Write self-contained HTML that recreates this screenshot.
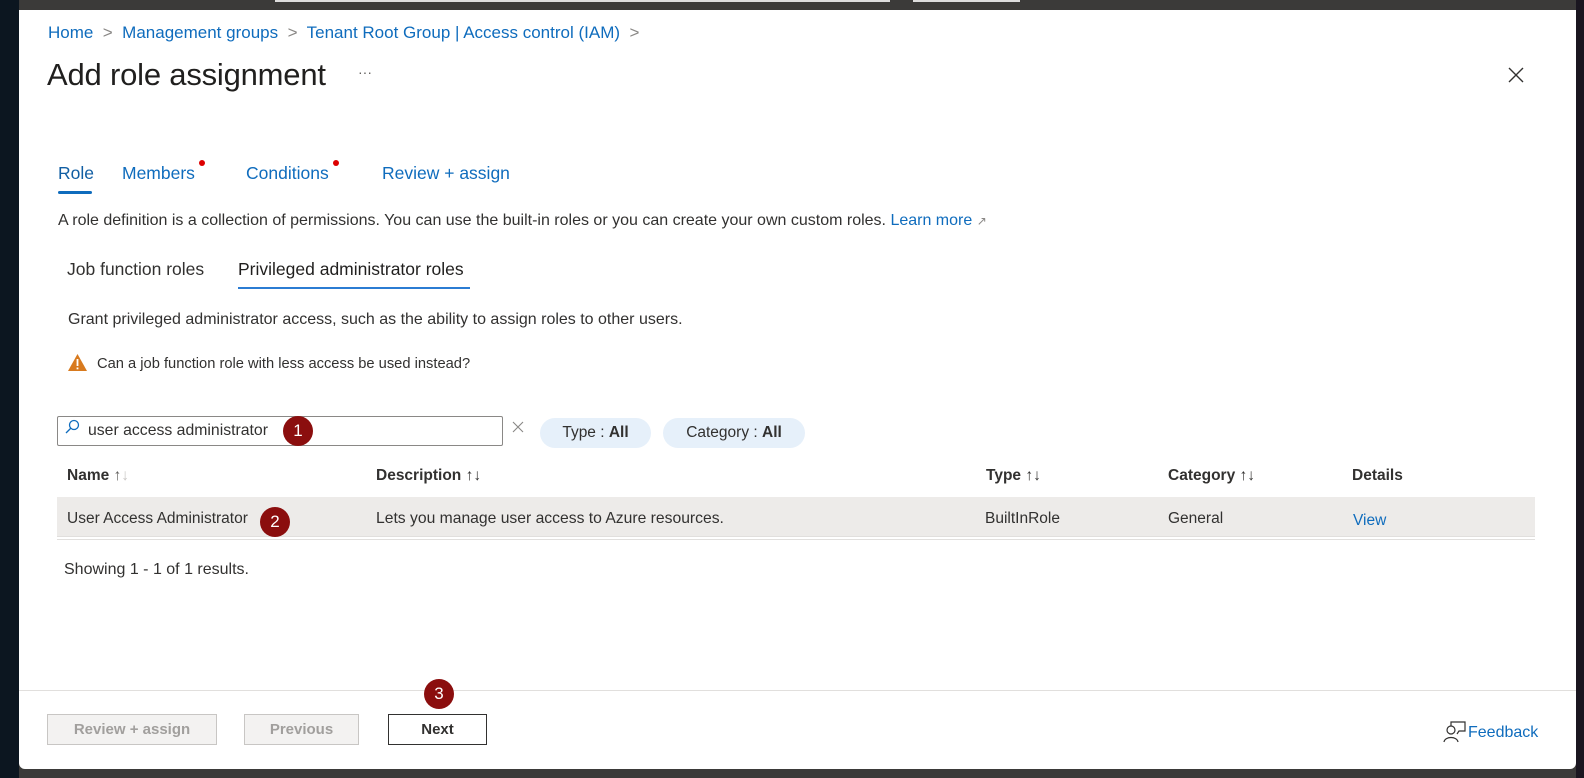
<!DOCTYPE html>
<html><head><meta charset="utf-8"><style>
*{margin:0;padding:0;box-sizing:border-box}
body{width:1584px;height:778px;overflow:hidden;background:#3b3a39;font-family:"Liberation Sans","DejaVu Sans",sans-serif;position:relative}
.a{position:absolute;white-space:nowrap}
#left{left:0;top:0;width:19px;height:778px;background:#0c1620}
#right{left:1576px;top:0;width:8px;height:778px;background:#1a1620}
#panel{left:19px;top:10px;width:1557px;height:759px;background:#fff;border-radius:0 0 6px 6px}
.blue{color:#0f6cbd}
.t{color:#323130}
.badge{position:absolute;width:30px;height:30px;border-radius:50%;background:#8b0e0e;color:#fff;font-size:17px;text-align:center;line-height:30px}
.btn{position:absolute;height:31px;border:1px solid #8a8886;font-size:15px;font-weight:bold;text-align:center;line-height:29px}
.dis{background:#f3f2f1;color:#a19f9d;border-color:#c8c6c4}
.pill{position:absolute;height:30px;border-radius:15px;background:#e6f0fa;font-size:15.5px;line-height:30px;text-align:center;color:#323130}
</style></head><body>
<div class="a" id="left"></div>
<div class="a" id="right"></div>
<div class="a" style="left:275px;top:0;width:615px;height:2px;background:#ddd"></div>
<div class="a" style="left:913px;top:0;width:107px;height:2px;background:#ddd"></div>
<div class="a" id="panel"></div>

<div class="a blue" style="left:48px;top:23px;font-size:17px">Home <span style="color:#8a8886">&nbsp;&gt;&nbsp;</span> Management groups <span style="color:#8a8886">&nbsp;&gt;&nbsp;</span> Tenant Root Group | Access control (IAM) <span style="color:#8a8886">&nbsp;&gt;</span></div>
<div class="a" style="left:47px;top:57px;font-size:31px;color:#201f1e;letter-spacing:-0.2px">Add role assignment</div>
<div class="a" style="left:358px;top:64px;font-size:14px;color:#605e5c">···</div>
<svg class="a" style="left:1508px;top:67px" width="16" height="16"><path d="M1 1L15 15M15 1L1 15" stroke="#323130" stroke-width="1.4"/></svg>

<div class="a blue" style="left:58px;top:163px;font-size:17.5px;color:#115ea3">Role</div>
<div class="a" style="left:58px;top:191px;width:34px;height:3px;background:#0f6cbd;border-radius:2px"></div>
<div class="a blue" style="left:122px;top:163px;font-size:17.5px">Members</div>
<div class="a" style="left:199px;top:160px;width:6px;height:6px;border-radius:50%;background:#d00"></div>
<div class="a blue" style="left:246px;top:163px;font-size:17.5px">Conditions</div>
<div class="a" style="left:333px;top:160px;width:6px;height:6px;border-radius:50%;background:#d00"></div>
<div class="a blue" style="left:382px;top:163px;font-size:17.5px">Review + assign</div>

<div class="a t" style="left:58px;top:212px;font-size:16px">A role definition is a collection of permissions. You can use the built-in roles or you can create your own custom roles. <span class="blue">Learn more</span> <span style="color:#8a8886;font-size:12px">↗</span></div>

<div class="a t" style="left:67px;top:259px;font-size:17.5px">Job function roles</div>
<div class="a" style="left:238px;top:259px;font-size:17.5px;color:#201f1e">Privileged administrator roles</div>
<div class="a" style="left:238px;top:287px;width:232px;height:2px;background:#2b7cd3"></div>

<div class="a t" style="left:68px;top:311px;font-size:16px">Grant privileged administrator access, such as the ability to assign roles to other users.</div>
<svg class="a" style="left:67px;top:353px" width="21" height="19"><path d="M10.5 1L20 18H1Z" fill="#d87a1e"/><rect x="9.6" y="6" width="1.8" height="7" fill="#fff"/><rect x="9.6" y="14.5" width="1.8" height="1.8" fill="#fff"/></svg>
<div class="a t" style="left:97px;top:356px;font-size:14.7px">Can a job function role with less access be used instead?</div>

<div class="a" style="left:57px;top:416px;width:446px;height:30px;border:1px solid #8a8886;border-radius:2px"></div>
<svg class="a" style="left:64px;top:419px" width="16" height="16"><circle cx="10" cy="6" r="4.5" fill="none" stroke="#0f6cbd" stroke-width="1.3"/><path d="M7 9L2 14" stroke="#0f6cbd" stroke-width="1.3"/></svg>
<div class="a t" style="left:88px;top:422px;font-size:15.8px">user access administrator</div>
<div class="badge" style="left:283px;top:416px">1</div>
<svg class="a" style="left:512px;top:421px" width="12" height="12"><path d="M1 1L11 11M11 1L1 11" stroke="#8a8886" stroke-width="1.1"/></svg>
<div class="pill" style="left:540px;top:418px;width:111px">Type : <b>All</b></div>
<div class="pill" style="left:663px;top:418px;width:142px">Category : <b>All</b></div>

<div class="a t" style="left:67px;top:467px;font-size:15.5px;font-weight:bold">Name <span style="font-weight:normal;color:#605e5c">↑<span style="color:#c8c6c4">↓</span></span></div>
<div class="a t" style="left:376px;top:467px;font-size:15.5px;font-weight:bold">Description <span style="font-weight:normal">↑↓</span></div>
<div class="a t" style="left:986px;top:467px;font-size:15.5px;font-weight:bold">Type <span style="font-weight:normal">↑↓</span></div>
<div class="a t" style="left:1168px;top:467px;font-size:15.5px;font-weight:bold">Category <span style="font-weight:normal">↑↓</span></div>
<div class="a t" style="left:1352px;top:467px;font-size:15.5px;font-weight:bold">Details</div>

<div class="a" style="left:57px;top:497px;width:1478px;height:40px;background:#edebe9;border-bottom:1px solid #e1dfdd"></div>
<div class="a t" style="left:67px;top:510px;font-size:15.5px">User Access Administrator</div>
<div class="badge" style="left:260px;top:507px">2</div>
<div class="a t" style="left:376px;top:510px;font-size:15.7px">Lets you manage user access to Azure resources.</div>
<div class="a t" style="left:985px;top:510px;font-size:15.5px">BuiltInRole</div>
<div class="a t" style="left:1168px;top:510px;font-size:15.5px">General</div>
<div class="a blue" style="left:1353px;top:512px;font-size:15.5px">View</div>
<div class="a" style="left:57px;top:539px;width:1478px;height:1px;background:#e1dfdd"></div>

<div class="a t" style="left:64px;top:561px;font-size:16px">Showing 1 - 1 of 1 results.</div>

<div class="a" style="left:19px;top:690px;width:1557px;height:1px;background:#e1dfdd"></div>
<div class="badge" style="left:424px;top:679px">3</div>
<div class="btn dis" style="left:47px;top:714px;width:170px">Review + assign</div>
<div class="btn dis" style="left:244px;top:714px;width:115px">Previous</div>
<div class="btn" style="left:388px;top:714px;width:99px;border-color:#323130;color:#323130;background:#fff">Next</div>

<svg class="a" style="left:1443px;top:721px" width="24" height="22"><circle cx="8" cy="9" r="4" fill="none" stroke="#323130" stroke-width="1.2"/><path d="M1 21C2 15 14 15 15 21" fill="none" stroke="#323130" stroke-width="1.2"/><path d="M8 5V1H22V10H16L14 13" fill="none" stroke="#323130" stroke-width="1.2"/></svg>
<div class="a blue" style="left:1468px;top:724px;font-size:16px">Feedback</div>
</body></html>
